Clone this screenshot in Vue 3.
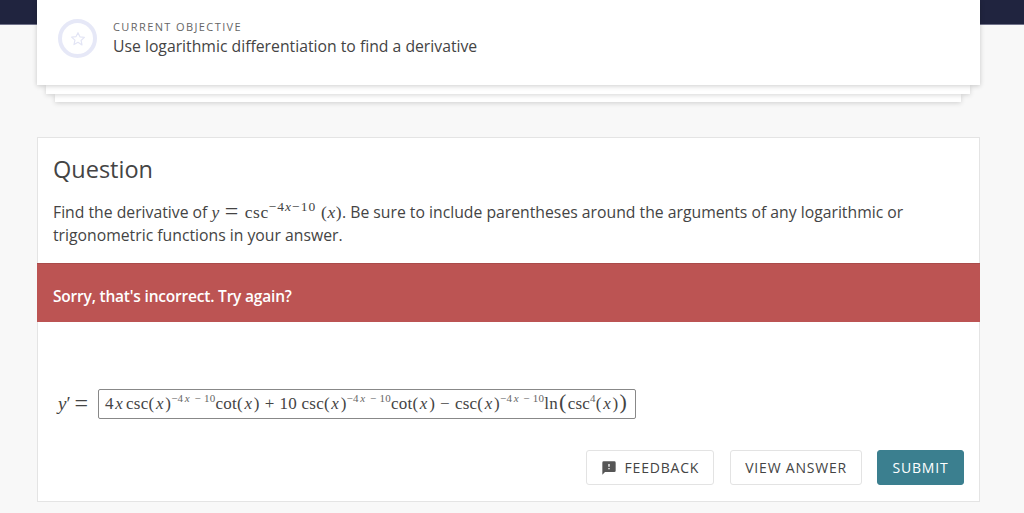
<template>
  <div class="page">
    <div class="topbar"></div>
    <main class="content">
      <section class="objective">
        <div class="objective-card">
          <div class="star-ring">
            <svg width="16" height="16" viewBox="0 0 24 24" fill="none" stroke="#e3e5f5" stroke-width="1.8" stroke-linejoin="round">
              <path d="M12 2.6l2.9 6.2 6.7.8-5 4.6 1.4 6.7L12 17l-6 3.4 1.4-6.7-5-4.6 6.7-.8z" />
            </svg>
          </div>
          <div>
            <div class="objective-label">CURRENT OBJECTIVE</div>
            <div class="objective-title">Use logarithmic differentiation to find a derivative</div>
          </div>
        </div>
        <div class="sheet sheet-one"></div>
        <div class="sheet sheet-two"></div>
      </section>

      <section class="question">
        <div class="question-body">
          <h2>Question</h2>
          <p>
            Find the derivative of
            <span class="math inline"><i>y</i><span class="op">=</span>csc<sup>−4<i>x</i>−10</sup> (<i>x</i>)</span>. Be sure to include parentheses around the arguments of any logarithmic or trigonometric functions in your answer.
          </p>
        </div>
        <div class="alert">Sorry, that's incorrect. Try again?</div>
        <div class="answer-row">
          <span class="math label"><i>y</i>′<span class="op">=</span></span>
          <div class="answer-box math">
            <span>4<i class="tight">x</i>csc(<i>x</i>)<sup>−4<i>x</i> − 10</sup>cot(<i>x</i>)<span class="op">+</span>10 csc(<i>x</i>)<sup>−4<i>x</i> − 10</sup>cot(<i>x</i>)<span class="op">−</span>csc(<i>x</i>)<sup>−4<i>x</i> − 10</sup>ln<span class="big">(</span>csc<sup>4</sup>(<i>x</i>)<span class="big">)</span></span>
          </div>
        </div>
        <div class="actions">
          <button class="btn">
            <svg width="16" height="16" viewBox="0 0 24 24" fill="#555">
              <path d="M20 2H4a2 2 0 0 0-2 2v18l4-4h14a2 2 0 0 0 2-2V4a2 2 0 0 0-2-2zm-7 12h-2v-2h2v2zm0-4h-2V6h2v4z" />
            </svg>
            FEEDBACK
          </button>
          <button class="btn">VIEW ANSWER</button>
          <button class="btn primary">SUBMIT</button>
        </div>
      </section>
    </main>
  </div>
</template>

<script setup>
</script>

<style>
html, body {
  margin: 0;
  background: #f8f8f8;
}
</style>

<style scoped>
.page {
  width: 1024px;
  height: 513px;
  overflow: hidden;
  background: #f8f8f8;
  font-family: "Open Sans", "Liberation Sans", sans-serif;
  color: #444;
}

.topbar {
  height: 24px;
  background: #20243f;
  border-bottom: 1px solid #70728a;
}

.content {
  margin-top: -25px;
  padding: 0 44px 0 37px;
}

.objective-card {
  position: relative;
  z-index: 2;
  display: flex;
  align-items: center;
  gap: 16px;
  height: 85px;
  padding: 0 21px;
  box-sizing: border-box;
  background: #fff;
  box-shadow: 0 1px 5px rgba(0, 0, 0, 0.2);
}

.star-ring {
  display: flex;
  align-items: center;
  justify-content: center;
  width: 39px;
  height: 39px;
  margin-top: -8px;
  box-sizing: border-box;
  border: 4px solid #e6e8f7;
  border-radius: 50%;
}

.objective-label {
  margin-top: -9px;
  font-size: 11px;
  line-height: 16px;
  letter-spacing: 1.4px;
  color: #666;
}

.objective-title {
  margin-top: 1px;
  font-size: 15.75px;
  line-height: 21px;
  color: #444;
}

.sheet {
  position: relative;
  background: #fff;
  box-shadow: 0 1px 5px rgba(0, 0, 0, 0.17);
}

.sheet-one {
  z-index: 1;
  height: 9px;
  margin: 0 10px 0 9px;
}

.sheet-two {
  height: 8px;
  margin: 0 19px 0 18px;
}

.question {
  margin-top: 35px;
  height: 365px;
  box-sizing: border-box;
  background: #fff;
  border: 1px solid #e4e4e4;
}

.question-body {
  height: 125px;
  padding: 15px 15px 0;
  box-sizing: border-box;
}

h2 {
  margin: 0;
  font-size: 23.5px;
  line-height: 33px;
  font-weight: 500;
  color: #444;
}

p {
  margin: 15px 0 0;
  width: 880px;
  font-size: 15.75px;
  line-height: 23px;
}

.math {
  font-family: "Liberation Serif", serif;
  color: #444;
}

.inline {
  font-size: 17.5px;
  letter-spacing: 0.5px;
}

.inline sup {
  font-size: 13.5px;
  line-height: 0;
  letter-spacing: 1px;
}

.inline .op {
  margin: 0 6px 0 5px;
  font-size: 24px;
  line-height: 0;
  vertical-align: -1px;
}

.alert {
  height: 59px;
  margin: 0 -1px;
  padding-left: 16px;
  line-height: 64px;
  box-sizing: border-box;
  background: #bc5453;
  border-top: 1px solid #a94b4a;
  font-size: 15.5px;
  font-weight: 600;
  letter-spacing: -0.2px;
  color: #fff;
}

.answer-row {
  display: flex;
  align-items: center;
  gap: 7px;
  height: 30px;
  margin-top: 67px;
  padding-left: 20px;
}

.label {
  width: 33px;
  font-size: 19px;
  white-space: nowrap;
}

.label .op {
  margin-left: 4px;
  font-size: 24px;
  line-height: 0;
  vertical-align: -1px;
}

.answer-box {
  display: flex;
  align-items: center;
  width: 538px;
  height: 30px;
  padding-left: 6px;
  box-sizing: border-box;
  border: 1px solid #888;
  border-radius: 2px;
  font-size: 17px;
  letter-spacing: 0.25px;
  white-space: nowrap;
}

.answer-box i {
  padding: 0 1.5px;
}

.answer-box .tight {
  padding-right: 3px;
}

.answer-box sup {
  font-size: 11px;
  line-height: 0;
  color: #666;
}

.answer-box .op {
  margin: 0 5px;
}

.big {
  padding: 0 1px;
  font-size: 22px;
  line-height: 0;
  font-weight: 300;
}

.actions {
  display: flex;
  justify-content: flex-end;
  gap: 16px;
  margin-top: 31px;
  padding-right: 15px;
}

.btn {
  display: flex;
  align-items: center;
  gap: 8px;
  height: 35px;
  padding: 0 14px;
  background: #fff;
  border: 1px solid #e3e3e3;
  border-radius: 3px;
  font-family: inherit;
  font-size: 14px;
  font-weight: 500;
  letter-spacing: 0.8px;
  color: #444;
}

.primary {
  margin-left: -1px;
  padding: 0 14.5px;
  background: #3b7f8f;
  border-color: #3b7f8f;
  color: #fff;
}
</style>
